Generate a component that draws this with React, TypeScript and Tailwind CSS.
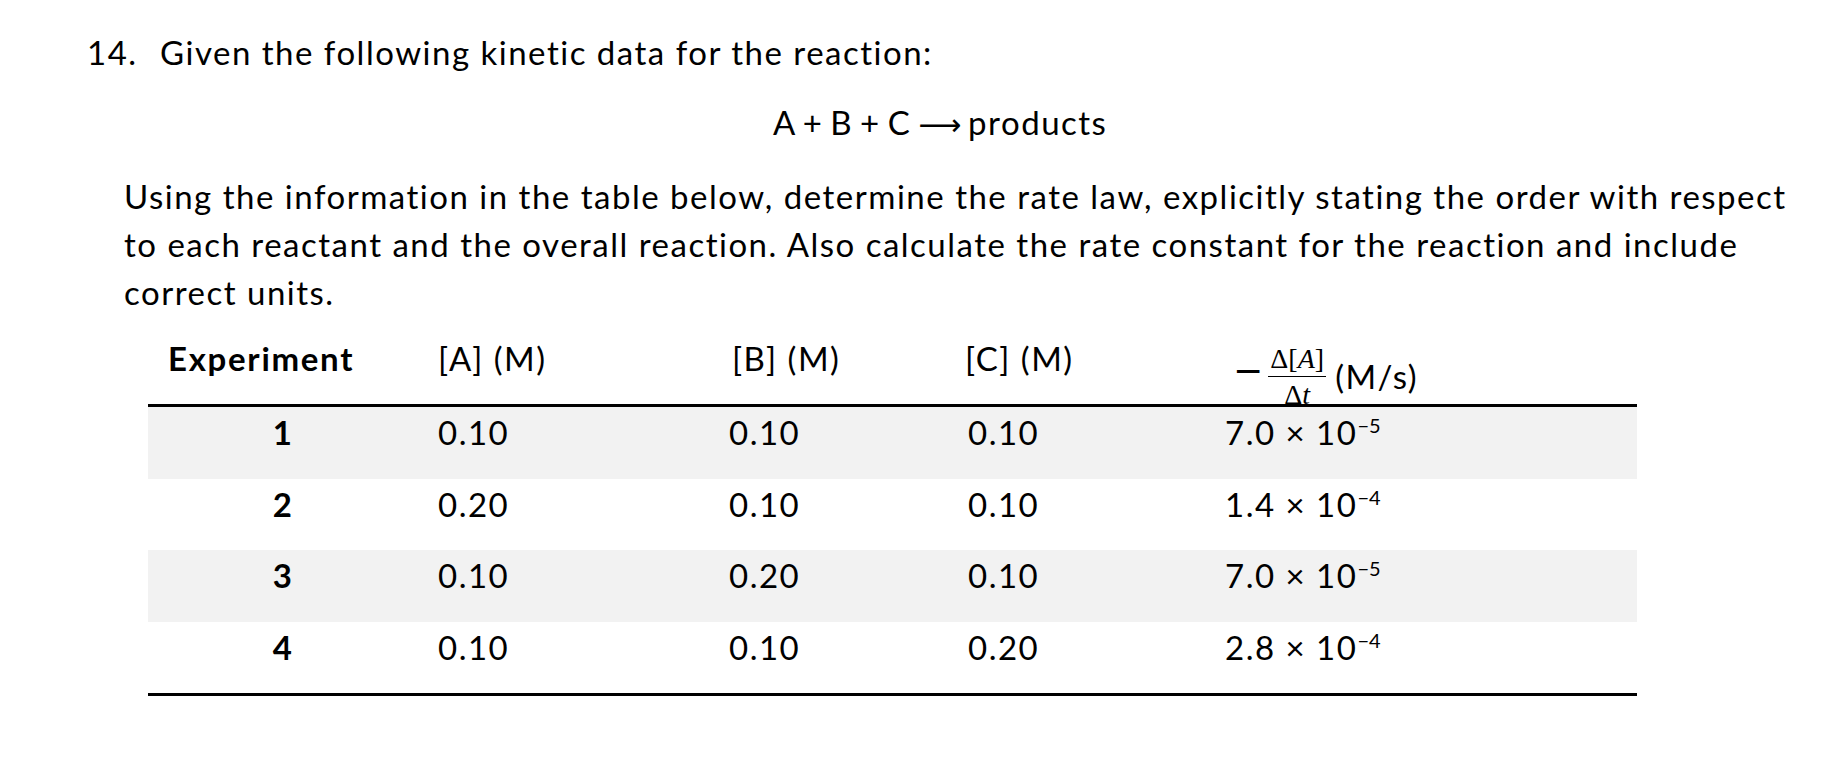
import React from "react";

const rows = [
  { n: "1", a: "0.10", b: "0.10", c: "0.10", m: "7.0", e: "−5", shade: true },
  { n: "2", a: "0.20", b: "0.10", c: "0.10", m: "1.4", e: "−4", shade: false },
  { n: "3", a: "0.10", b: "0.20", c: "0.10", m: "7.0", e: "−5", shade: true },
  { n: "4", a: "0.10", b: "0.10", c: "0.20", m: "2.8", e: "−4", shade: false },
];

const cols = "grid grid-cols-[270px_290px_236px_259px_434px]";

function RateHeader() {
  return (
    <div className="flex items-start pl-[30px] pt-[3px]">
      <span className="mt-[16px] font-['DejaVu_Sans',sans-serif] text-[36px] leading-[36px] tracking-normal">−</span>
      <div className="ml-[5px] mt-[9px] flex flex-col items-center font-['Liberation_Serif',serif] text-[28px] leading-[26px] tracking-normal">
        <span>
          Δ[<i>A</i>]
        </span>
        <div className="mt-[4px] h-px w-[58px] bg-black" />
        <span className="mt-[5px]">
          Δ<i>t</i>
        </span>
      </div>
      <span className="ml-[9px] mt-[15px]">(M/s)</span>
    </div>
  );
}

export default function App() {
  return (
    <div className="min-h-screen bg-white pt-[28px] font-['Lato',sans-serif] text-[33px] leading-[48px] tracking-[1.5px] text-black">
      <div className="flex pl-[87px]">
        <span className="w-[73px]">14.</span>
        <span>Given the following kinetic data for the reaction:</span>
      </div>

      <div className="mt-[22px] pl-[773px] whitespace-nowrap [word-spacing:-3px]">
        A + B + C <span className="font-['DejaVu_Sans',sans-serif] text-[30px] tracking-normal">⟶</span> products
      </div>

      <p className="mt-[23px] pl-[124px] whitespace-nowrap">
        Using the information in the table below, determine the rate law, explicitly stating the order with respect
        <br />
        to each reactant and the overall reaction. Also calculate the rate constant for the reaction and include
        <br />
        correct units.
      </p>

      <div className="ml-[148px] mt-[18px] w-[1489px]">
        <div className={`${cols} h-[73px] border-b-[3px] border-black`}>
          <div className="pl-[20px] font-bold tracking-[1.7px]">Experiment</div>
          <div className="pl-[20px]">[A] (M)</div>
          <div className="pl-[24px]">[B] (M)</div>
          <div className="pl-[21px]">[C] (M)</div>
          <RateHeader />
        </div>

        {rows.map((r) => (
          <div key={r.n} className={`${cols} h-[71.5px] pt-[1px] ${r.shade ? "bg-[#f2f2f2]" : "bg-white"}`}>
            <div className="text-center font-bold">{r.n}</div>
            <div className="pl-[20px]">{r.a}</div>
            <div className="pl-[21px]">{r.b}</div>
            <div className="pl-[24px]">{r.c}</div>
            <div className="pl-[22px] whitespace-nowrap">
              {r.m} × 10
              <span className="align-[12px] text-[20px] leading-none tracking-normal">{r.e}</span>
            </div>
          </div>
        ))}
        <div className="h-[3px] bg-black" />
      </div>
    </div>
  );
}
